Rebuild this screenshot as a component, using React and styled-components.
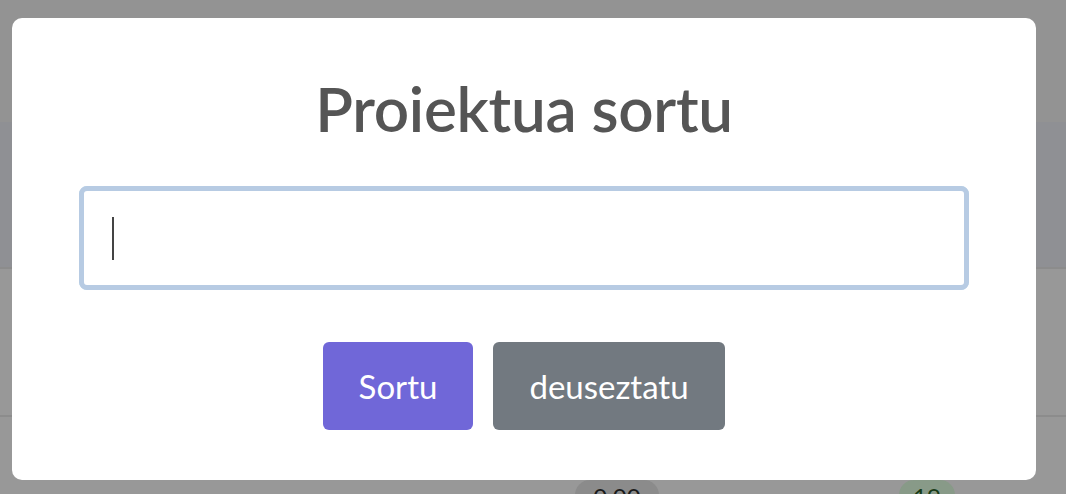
import React from "react";
import styled, { createGlobalStyle } from "styled-components";

const Global = createGlobalStyle`
  html, body { margin: 0; padding: 0; }
  body { width: 1066px; height: 494px; overflow: hidden; font-family: Lato, "Noto Sans", sans-serif; background: #989898; }
`;

const Page = styled.div`
  width: 1066px;
  height: 494px;
  display: flex;
  flex-direction: column;
  overflow: hidden;
`;

const Band = styled.div`
  height: ${(p) => p.$h}px;
  background: ${(p) => p.$bg};
  border-bottom: ${(p) => (p.$line ? "2px solid #8c8c8c" : "none")};
  box-sizing: border-box;
  flex-shrink: 0;
`;

const Footer = styled.div`
  flex: 1;
  background: #989898;
  position: relative;
`;

const Pill = styled.span`
  position: absolute;
  top: 63px;
  left: ${(p) => p.$x}px;
  width: ${(p) => p.$w}px;
  height: 30px;
  border-radius: 15px;
  background: ${(p) => p.$bg};
  color: ${(p) => p.$fg};
  font-family: Lato, "Liberation Sans", sans-serif;
  font-size: 24px;
  text-align: center;
  line-height: 34px;
`;

const Overlay = styled.div`
  position: fixed;
  inset: 0;
  display: flex;
  justify-content: flex-start;
  align-items: flex-start;
  padding: 18px 0 0 12px;
`;

const Modal = styled.div`
  width: 1024px;
  height: 462px;
  box-sizing: border-box;
  background: #fff;
  border-radius: 10px;
  display: flex;
  flex-direction: column;
  align-items: center;
  padding: 52px 67px 0;
`;

const Title = styled.h2`
  margin: 0;
  font-family: Lato, "Noto Sans", sans-serif;
  font-weight: 600;
  font-size: 62px;
  line-height: 76px;
  color: #555555;
  letter-spacing: -0.3px;
`;

const FieldWrap = styled.div`
  position: relative;
  margin-top: 40px;
  width: 890px;
  height: 104px;
`;

const Field = styled.input`
  width: 100%;
  height: 100%;
  box-sizing: border-box;
  border: 1px solid #bcdcec;
  border-radius: 8px;
  box-shadow: 0 0 0 2px #bfdcea inset;
  outline: 5px solid #b7cbe3;
  outline-offset: -5px;
  padding: 0 32px;
  font-family: Lato, sans-serif;
  font-size: 36px;
  color: #555;
  caret-color: transparent;
  background: #fff;
`;

const Caret = styled.span`
  position: absolute;
  left: 33px;
  top: 31px;
  width: 2px;
  height: 43px;
  background: #444;
  pointer-events: none;
`;

const Actions = styled.div`
  margin-top: 52px;
  display: flex;
  gap: 20px;
`;

const Button = styled.button`
  height: 88px;
  width: ${(p) => p.$w}px;
  border: none;
  border-radius: 6px;
  background: ${(p) => p.$bg};
  color: #fff;
  font-family: Lato, "Noto Sans", sans-serif;
  font-size: 33px;
  font-weight: 400;
  cursor: pointer;
  padding: 0;
`;

export default function App() {
  return (
    <>
      <Global />
      <Page>
        <Band $h={122} $bg="#939393" />
        <Band $h={147} $bg="#8f9094" $line />
        <Band $h={148} $bg="#989898" $line />
        <Footer>
          <Pill $x={575} $w={84} $bg="#8b8b8b" $fg="#1a1a1a">0.00</Pill>
          <Pill $x={899} $w={56} $bg="#889a88" $fg="#173a17">19</Pill>
        </Footer>
      </Page>
      <Overlay>
        <Modal>
          <Title>Proiektua sortu</Title>
          <FieldWrap>
            <Field type="text" aria-label="Proiektuaren izena" />
            <Caret />
          </FieldWrap>
          <Actions>
            <Button $w={150} $bg="#7067d8">Sortu</Button>
            <Button $w={232} $bg="#727980">deuseztatu</Button>
          </Actions>
        </Modal>
      </Overlay>
    </>
  );
}
